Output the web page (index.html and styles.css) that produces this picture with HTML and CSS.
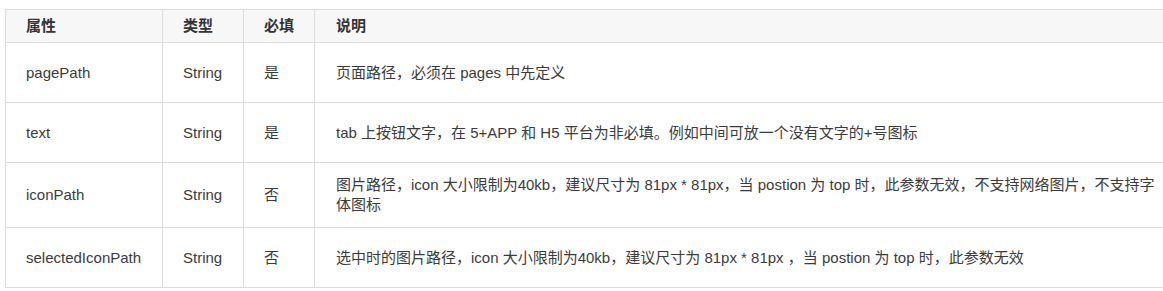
FILE: index.html
```html
<!DOCTYPE html>
<html lang="zh-CN">
<head>
<meta charset="utf-8">
<title>tabBar list</title>
<link rel="stylesheet" href="styles.css">
</head>
<body>
<table class="props">
  <colgroup>
    <col class="c-name">
    <col class="c-type">
    <col class="c-req">
    <col class="c-desc">
  </colgroup>
  <thead>
    <tr><th>属性</th><th>类型</th><th>必填</th><th>说明</th></tr>
  </thead>
  <tbody>
    <tr><td>pagePath</td><td>String</td><td>是</td><td>页面路径，必须在 pages 中先定义</td></tr>
    <tr><td>text</td><td>String</td><td>是</td><td>tab 上按钮文字，在 5+APP 和 H5 平台为非必填。例如中间可放一个没有文字的+号图标</td></tr>
    <tr><td>iconPath</td><td>String</td><td>否</td><td>图片路径，icon 大小限制为40kb，建议尺寸为 81px * 81px，当 postion 为 top 时，此参数无效，不支持网络图片，不支持字体图标</td></tr>
    <tr><td>selectedIconPath</td><td>String</td><td>否</td><td>选中时的图片路径，icon 大小限制为40kb，建议尺寸为 81px * 81px ，当 postion 为 top 时，此参数无效</td></tr>
  </tbody>
</table>
</body>
</html>
```
FILE: styles.css
```css
html, body {
  margin: 0;
  padding: 0;
  background: #fff;
  overflow: hidden;
}
body {
  padding: 9px 0 0 5px;
  font-family: "Liberation Sans", "Noto Sans CJK SC", Arial, sans-serif;
  font-size: 15px;
  color: #3b3b3b;
}
.props {
  border-collapse: collapse;
  table-layout: fixed;
  width: 1175px;
}
.c-name { width: 157px; }
.c-type { width: 81px; }
.c-req { width: 71px; }
.props th,
.props td {
  border: 1px solid #dcdcdc;
  text-align: left;
  vertical-align: middle;
  line-height: 20px;
}
.props th {
  background: #f7f7f7;
  font-weight: bold;
  color: #333;
  padding: 6px 20px;
  height: 20px;
}
.props td {
  padding: 12px 20px;
  height: 35px;
}
.props td:last-child,
.props th:last-child {
  padding-left: 21px;
}
```
